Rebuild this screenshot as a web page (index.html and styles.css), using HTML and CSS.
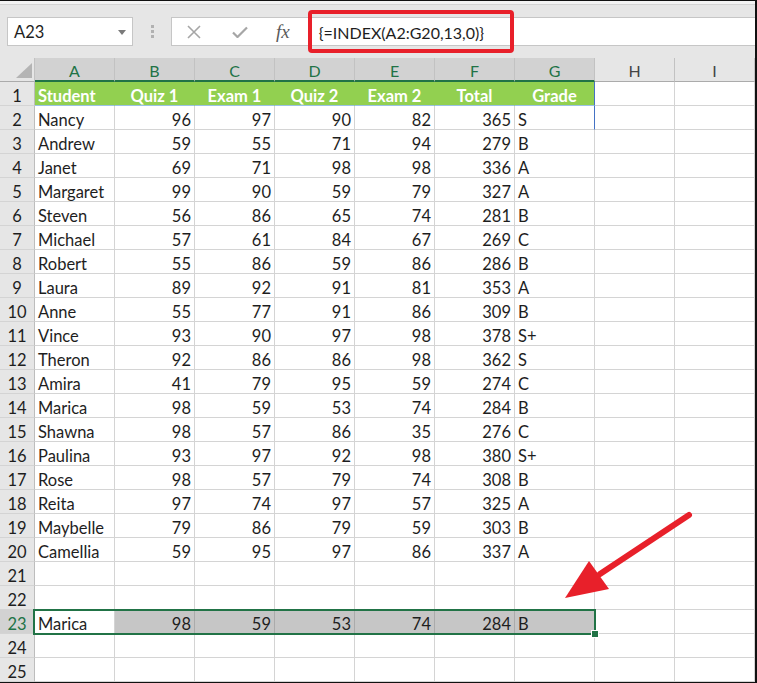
FILE: index.html
```html
<!DOCTYPE html>
<html lang="en">
<head>
  <meta charset="UTF-8">
  <meta name="viewport" content="width=device-width, initial-scale=1.0">
  <title>INDEX array formula</title>
  <link rel="stylesheet" href="styles.css">
</head>
<body>
<div class="window">

  <!-- Name box + formula bar -->
  <div class="toolbar">
    <div class="topstrip"></div>
    <div class="formula-row">
      <div class="namebox"><span>A23</span><span class="caret"></span></div>
      <div class="grip"><i></i><i></i><i></i></div>
      <div class="formula-bar">
        <svg class="icon-cancel" width="14" height="14" viewBox="0 0 14 14"><path d="M1 1L13 13M13 1L1 13" stroke="#a6a6a6" stroke-width="1.6" fill="none"/></svg>
        <svg class="icon-enter" width="16" height="12" viewBox="0 0 16 12"><path d="M1 6.5L5.5 11L15 1.5" stroke="#a6a6a6" stroke-width="2.2" fill="none"/></svg>
        <span class="fx">fx</span>
        <span class="formula">{=INDEX(A2:G20,13,0)}</span>
      </div>
    </div>
  </div>

  <!-- Grid -->
  <div class="sheet">
    <div class="row colheads">
      <div class="corner"><svg width="18" height="16" viewBox="0 0 18 16"><polygon points="17,0 17,15 1,15" fill="#b4b4b4"/></svg></div>
      <div class="ch on">A</div><div class="ch on">B</div><div class="ch on">C</div><div class="ch on">D</div>
      <div class="ch on">E</div><div class="ch on">F</div><div class="ch on">G</div><div class="ch">H</div><div class="ch">I</div>
    </div>

    <div class="row top">
      <div class="rh">1</div>
      <div class="c">Student</div><div class="c m">Quiz 1</div><div class="c m">Exam 1</div><div class="c m">Quiz 2</div>
      <div class="c m">Exam 2</div><div class="c m">Total</div><div class="c m edge">Grade</div><div class="c"></div><div class="c"></div>
    </div>
    <div class="row">
      <div class="rh">2</div><div class="c">Nancy</div><div class="c n">96</div><div class="c n">97</div><div class="c n">90</div><div class="c n">82</div><div class="c n">365</div><div class="c edge">S</div><div class="c"></div><div class="c"></div>
    </div>
    <div class="row">
      <div class="rh">3</div><div class="c">Andrew</div><div class="c n">59</div><div class="c n">55</div><div class="c n">71</div><div class="c n">94</div><div class="c n">279</div><div class="c">B</div><div class="c"></div><div class="c"></div>
    </div>
    <div class="row">
      <div class="rh">4</div><div class="c">Janet</div><div class="c n">69</div><div class="c n">71</div><div class="c n">98</div><div class="c n">98</div><div class="c n">336</div><div class="c">A</div><div class="c"></div><div class="c"></div>
    </div>
    <div class="row">
      <div class="rh">5</div><div class="c">Margaret</div><div class="c n">99</div><div class="c n">90</div><div class="c n">59</div><div class="c n">79</div><div class="c n">327</div><div class="c">A</div><div class="c"></div><div class="c"></div>
    </div>
    <div class="row">
      <div class="rh">6</div><div class="c">Steven</div><div class="c n">56</div><div class="c n">86</div><div class="c n">65</div><div class="c n">74</div><div class="c n">281</div><div class="c">B</div><div class="c"></div><div class="c"></div>
    </div>
    <div class="row">
      <div class="rh">7</div><div class="c">Michael</div><div class="c n">57</div><div class="c n">61</div><div class="c n">84</div><div class="c n">67</div><div class="c n">269</div><div class="c">C</div><div class="c"></div><div class="c"></div>
    </div>
    <div class="row">
      <div class="rh">8</div><div class="c">Robert</div><div class="c n">55</div><div class="c n">86</div><div class="c n">59</div><div class="c n">86</div><div class="c n">286</div><div class="c">B</div><div class="c"></div><div class="c"></div>
    </div>
    <div class="row">
      <div class="rh">9</div><div class="c">Laura</div><div class="c n">89</div><div class="c n">92</div><div class="c n">91</div><div class="c n">81</div><div class="c n">353</div><div class="c">A</div><div class="c"></div><div class="c"></div>
    </div>
    <div class="row">
      <div class="rh">10</div><div class="c">Anne</div><div class="c n">55</div><div class="c n">77</div><div class="c n">91</div><div class="c n">86</div><div class="c n">309</div><div class="c">B</div><div class="c"></div><div class="c"></div>
    </div>
    <div class="row">
      <div class="rh">11</div><div class="c">Vince</div><div class="c n">93</div><div class="c n">90</div><div class="c n">97</div><div class="c n">98</div><div class="c n">378</div><div class="c">S+</div><div class="c"></div><div class="c"></div>
    </div>
    <div class="row">
      <div class="rh">12</div><div class="c">Theron</div><div class="c n">92</div><div class="c n">86</div><div class="c n">86</div><div class="c n">98</div><div class="c n">362</div><div class="c">S</div><div class="c"></div><div class="c"></div>
    </div>
    <div class="row">
      <div class="rh">13</div><div class="c">Amira</div><div class="c n">41</div><div class="c n">79</div><div class="c n">95</div><div class="c n">59</div><div class="c n">274</div><div class="c">C</div><div class="c"></div><div class="c"></div>
    </div>
    <div class="row">
      <div class="rh">14</div><div class="c">Marica</div><div class="c n">98</div><div class="c n">59</div><div class="c n">53</div><div class="c n">74</div><div class="c n">284</div><div class="c">B</div><div class="c"></div><div class="c"></div>
    </div>
    <div class="row">
      <div class="rh">15</div><div class="c">Shawna</div><div class="c n">98</div><div class="c n">57</div><div class="c n">86</div><div class="c n">35</div><div class="c n">276</div><div class="c">C</div><div class="c"></div><div class="c"></div>
    </div>
    <div class="row">
      <div class="rh">16</div><div class="c">Paulina</div><div class="c n">93</div><div class="c n">97</div><div class="c n">92</div><div class="c n">98</div><div class="c n">380</div><div class="c">S+</div><div class="c"></div><div class="c"></div>
    </div>
    <div class="row">
      <div class="rh">17</div><div class="c">Rose</div><div class="c n">98</div><div class="c n">57</div><div class="c n">79</div><div class="c n">74</div><div class="c n">308</div><div class="c">B</div><div class="c"></div><div class="c"></div>
    </div>
    <div class="row">
      <div class="rh">18</div><div class="c">Reita</div><div class="c n">97</div><div class="c n">74</div><div class="c n">97</div><div class="c n">57</div><div class="c n">325</div><div class="c">A</div><div class="c"></div><div class="c"></div>
    </div>
    <div class="row">
      <div class="rh">19</div><div class="c">Maybelle</div><div class="c n">79</div><div class="c n">86</div><div class="c n">79</div><div class="c n">59</div><div class="c n">303</div><div class="c">B</div><div class="c"></div><div class="c"></div>
    </div>
    <div class="row">
      <div class="rh">20</div><div class="c">Camellia</div><div class="c n">59</div><div class="c n">95</div><div class="c n">97</div><div class="c n">86</div><div class="c n">337</div><div class="c">A</div><div class="c"></div><div class="c"></div>
    </div>
    <div class="row">
      <div class="rh">21</div><div class="c"></div><div class="c"></div><div class="c"></div><div class="c"></div><div class="c"></div><div class="c"></div><div class="c"></div><div class="c"></div><div class="c"></div>
    </div>
    <div class="row">
      <div class="rh">22</div><div class="c"></div><div class="c"></div><div class="c"></div><div class="c"></div><div class="c"></div><div class="c"></div><div class="c"></div><div class="c"></div><div class="c"></div>
    </div>
    <div class="row sel">
      <div class="rh">23</div><div class="c active">Marica</div><div class="c n">98</div><div class="c n">59</div><div class="c n">53</div><div class="c n">74</div><div class="c n">284</div><div class="c">B</div><div class="c out"></div><div class="c out"></div>
    </div>
    <div class="row">
      <div class="rh">24</div><div class="c"></div><div class="c"></div><div class="c"></div><div class="c"></div><div class="c"></div><div class="c"></div><div class="c"></div><div class="c"></div><div class="c"></div>
    </div>
    <div class="row">
      <div class="rh">25</div><div class="c"></div><div class="c"></div><div class="c"></div><div class="c"></div><div class="c"></div><div class="c"></div><div class="c"></div><div class="c"></div><div class="c"></div>
    </div>
  </div>

  <!-- overlays -->
  <div class="selection"><span class="handle"></span></div>
  <div class="callout"></div>
  <svg class="arrow" width="755" height="682" viewBox="0 0 755 682">
    <line x1="600" y1="573" x2="689" y2="514" stroke="#e8202a" stroke-width="6" stroke-linecap="round"/>
    <polygon points="565,597 589,560 609,588" fill="#e8202a"/>
  </svg>
</div>
</body>
</html>
```

FILE: styles.css
```css
body {
  margin: 0;
  font-family: Lato, "Liberation Sans", sans-serif;
  font-size: 16.5px;
  color: #1e1e1e;
}
.window {
  position: relative;
  width: 757px;
  height: 683px;
  box-sizing: border-box;
  border-top: 1px solid #111;
  border-right: 2px solid #111;
  border-bottom: 1px solid #111;
  background: #fff;
  overflow: hidden;
}

/* toolbar */
.toolbar {
  height: 57px;
  background: #e6e6e6;
}
.topstrip {
  height: 3px;
  background: #f3f3f3;
  border-bottom: 1px solid #d4d4d4;
}
.formula-row {
  display: flex;
  align-items: flex-start;
  padding: 12px 0 0 7px;
}
.namebox {
  display: flex;
  align-items: center;
  width: 126px;
  height: 29px;
  box-sizing: border-box;
  padding: 1px 6px 0;
  background: #fff;
  border: 1px solid #c6c6c6;
}
.caret {
  margin-left: auto;
  border-top: 5px solid #7a7a7a;
  border-left: 4px solid transparent;
  border-right: 4px solid transparent;
}
.grip {
  display: flex;
  flex-direction: column;
  gap: 2px;
  margin: 8px 0 0 18px;
}
.grip i {
  display: block;
  width: 3px;
  height: 3px;
  background: #b1b1b1;
}
.formula-bar {
  flex: 1;
  display: flex;
  align-items: center;
  height: 29px;
  box-sizing: border-box;
  margin-left: 17px;
  background: #fff;
  border: 1px solid #c6c6c6;
  border-right: none;
}
.icon-cancel {
  margin-left: 15px;
}
.icon-enter {
  margin-left: 31px;
}
.fx {
  margin-left: 28px;
  font-family: "Liberation Serif", serif;
  font-style: italic;
  font-size: 19px;
  color: #5a5a5a;
}
.formula {
  margin-left: 29px;
  padding-top: 1px;
  font-size: 16px;
  color: #1e1e1e;
}

/* sheet */
.row {
  display: grid;
  grid-template-columns: 35px repeat(9, 80px);
  height: 24px;
}
.row > div {
  box-sizing: border-box;
  border-right: 1px solid #d4d4d4;
  border-bottom: 1px solid #d4d4d4;
  line-height: 28px;
  white-space: nowrap;
  overflow: hidden;
}
.rh {
  background: #e6e6e6;
  text-align: center;
  border-right-color: #bdbdbd !important;
}
.c {
  padding: 0 3px;
}
.n {
  text-align: right;
}
.m {
  text-align: center;
}
.colheads > div {
  background: #e6e6e6;
  border-right-color: #c2c2c2;
  border-bottom-color: #ababab;
  text-align: center;
  font-size: 16px;
  line-height: 25px;
  color: #444;
}
.colheads .corner {
  display: flex;
  align-items: flex-end;
  justify-content: flex-end;
  padding: 0 1px 2px 0;
}
.colheads .corner svg {
  display: block;
}
.colheads .on {
  background: #d2d2d2;
  color: #217346;
  border-bottom: 2px solid #217346;
}
.top .c {
  background: #92d050;
  border-right-color: #92d050;
  border-bottom-color: #9bc2e6;
  color: #fff;
  font-weight: bold;
}
.top .c:nth-child(n+9) {
  background: #fff;
  border-right-color: #d4d4d4;
  border-bottom-color: #d4d4d4;
}
.row > .edge {
  border-right-color: #4472c4;
}
.sel .c {
  background: #c6c6c6;
  border-right-color: #ababab;
}
.sel .active,
.sel .out {
  background: #fff;
  border-right-color: #d4d4d4;
}
.sel .rh {
  background: #d2d2d2;
  color: #217346;
}

/* overlays */
.selection {
  position: absolute;
  left: 33px;
  top: 608px;
  width: 563px;
  height: 26px;
  box-sizing: border-box;
  border: 2px solid #217346;
}
.handle {
  position: absolute;
  right: -5px;
  bottom: -5px;
  width: 6px;
  height: 6px;
  background: #217346;
  border: 1px solid #fff;
}
.callout {
  position: absolute;
  left: 308px;
  top: 9px;
  width: 206px;
  height: 43px;
  box-sizing: border-box;
  border: 4px solid #e8202a;
  border-radius: 4px;
}
.arrow {
  position: absolute;
  left: 0;
  top: 0;
  pointer-events: none;
}
```
